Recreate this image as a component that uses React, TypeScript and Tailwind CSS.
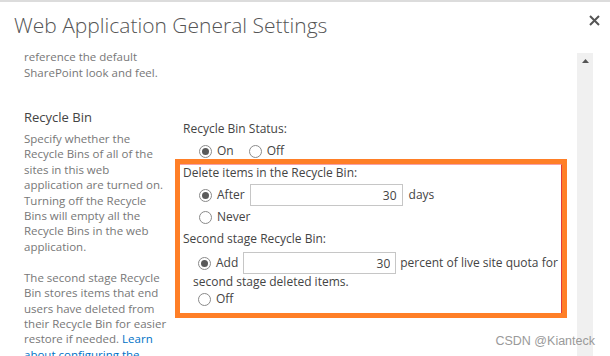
import React from 'react';

const Radio = ({ checked }: { checked?: boolean }) => (
  <span className="relative inline-flex h-[13px] w-[13px] shrink-0 items-center justify-center rounded-full border border-[#8a8a8a] bg-white">
    {checked && <span className="h-[7px] w-[7px] rounded-full bg-[#5a5a5a]" />}
  </span>
);

const Field = () => (
  <input
    readOnly
    value="30"
    className="h-[22px] w-[153px] border border-[#c6c6c6] bg-white px-[5px] text-right text-[12px] text-[#444] outline-none"
  />
);

export default function App() {
  return (
    <div className="relative flex h-[356px] w-[610px] flex-col overflow-hidden border-t-2 border-[#dcdcdc] bg-white font-['Open_Sans',sans-serif] text-[12px] text-[#444]">
      {/* header */}
      <div className="flex h-[43px] shrink-0 items-start justify-between pl-[14px] pr-[10px] pt-[9px]">
        <h1 className="text-[21px] font-light leading-[28px] text-[#555]">
          Web Application General Settings
        </h1>
        <button className="mt-[4px] text-[#555]">
          <svg width="11" height="11" viewBox="0 0 11 11">
            <path d="M1 1 L10 10 M10 1 L1 10" stroke="currentColor" strokeWidth="2" />
          </svg>
        </button>
      </div>

      {/* body */}
      <div className="flex min-h-0 flex-1">
        <div className="min-w-0 flex-1 overflow-hidden">
          <div className="pl-[24px] pt-[4px]">
            <p className="w-[142px] text-[11.5px] leading-[15.5px] text-[#777]">
              reference the default SharePoint look and feel.
            </p>

            <div className="mt-[28px] flex">
              <div className="w-[151px] shrink-0 whitespace-nowrap">
                <h2 className="text-[13px] leading-[18px] text-[#444]">Recycle Bin</h2>
                <p className="mt-[5px] text-[11.5px] leading-[15.4px] text-[#777]">
                  Specify whether the
                  <br />
                  Recycle Bins of all of the
                  <br />
                  sites in this web
                  <br />
                  application are turned on.
                  <br />
                  Turning off the Recycle
                  <br />
                  Bins will empty all the
                  <br />
                  Recycle Bins in the web
                  <br />
                  application.
                </p>
                <p className="mt-[15.5px] text-[11.5px] leading-[15.4px] text-[#777]">
                  The second stage Recycle
                  <br />
                  Bin stores items that end
                  <br />
                  users have deleted from
                  <br />
                  their Recycle Bin for easier
                  <br />
                  restore if needed. <span className="text-[#0072c6]">Learn</span>
                  <br />
                  <span className="text-[#0072c6]">about configuring the</span>
                </p>
              </div>

              <div className="w-[392px] shrink-0 pt-[13px]">
                <div className="pl-[8px]">
                  <div className="leading-[16px]">Recycle Bin Status:</div>
                  <div className="mt-[6px] flex h-[16px] items-center pl-[16px]">
                    <Radio checked />
                    <span className="ml-[5px]">On</span>
                    <span className="ml-[15px] flex">
                      <Radio />
                    </span>
                    <span className="ml-[5px]">Off</span>
                  </div>
                </div>

                {/* highlighted block */}
                <div className="border-[5px] border-[#ff7f27]">
                  <div className="border-r border-t border-r-[#e23a3a] border-t-[#f7a0a8] pb-[5px] pl-[3px]">
                    <div className="leading-[16px]">Delete items in the Recycle Bin:</div>
                    <div className="pl-[10px]">
                      <div className="mt-[3px] flex h-[22px] items-center gap-[5px] pl-[6px]">
                        <Radio checked />
                        <span>After</span>
                        <Field />
                        <span className="ml-[1px]">days</span>
                      </div>
                      <div className="flex h-[22px] items-center gap-[5px] pl-[6px]">
                        <Radio />
                        <span>Never</span>
                      </div>
                    </div>

                    <div className="mt-[3px] leading-[16px]">Second stage Recycle Bin:</div>
                    <div className="pl-[10px]">
                      <div className="mt-[5px] flex h-[22px] items-center gap-[5px] pl-[5px]">
                        <Radio checked />
                        <span>Add</span>
                        <Field />
                        <span className="ml-[-1px]">percent of live site quota for</span>
                      </div>
                      <div className="leading-[16px]">second stage deleted items.</div>
                      <div className="flex h-[18px] items-center gap-[5px] pl-[5px]">
                        <Radio />
                        <span>Off</span>
                      </div>
                    </div>
                  </div>
                </div>
              </div>
            </div>
          </div>
        </div>

        {/* scrollbar */}
        <div className="mr-[17px] mt-[8px] flex w-[16px] shrink-0 justify-center bg-[#f0f0f0] pt-[6px]">
          <svg width="7" height="4" viewBox="0 0 7 4">
            <path d="M3.5 0 L7 4 L0 4 Z" fill="#555" />
          </svg>
        </div>
      </div>

      <span className="absolute bottom-[7px] right-[15px] font-['Liberation_Sans',sans-serif] text-[12.5px] leading-[16px] text-[#9a9a9a]">
        CSDN @Kianteck
      </span>
    </div>
  );
}
